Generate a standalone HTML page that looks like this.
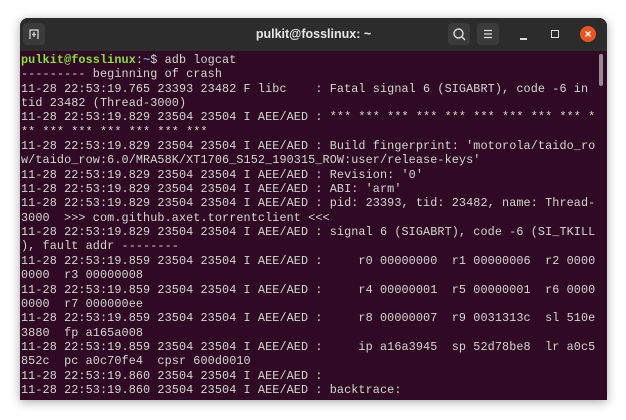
<!DOCTYPE html>
<html><head><style>
body{margin:0;width:626px;height:420px;background:#fff;overflow:hidden;position:relative;font-family:"Liberation Sans",sans-serif}
.win{position:absolute;left:20px;top:18px;width:587px;height:382px;border-radius:8px 8px 0 0;overflow:hidden;box-shadow:0 2px 10px rgba(0,0,0,.35);background:#300a24}
.tb{position:absolute;left:0;top:0;width:587px;height:33px;background:#2c2c2c}
.btn{position:absolute;top:5px;width:22px;height:22px;background:#3b3b3b;border-radius:4px}
.title{position:absolute;left:0;width:100%;top:9px;text-align:center;color:#e8e8e8;font-weight:bold;font-size:12.5px}
.term{position:absolute;left:1px;top:35px;font-family:"Liberation Mono",monospace;font-size:11.8px;line-height:14.35px;color:#d3d7cf;white-space:pre;letter-spacing:0.1px}
.g{color:#8ae234;font-weight:bold}.b{color:#729fcf;font-weight:bold}
</style></head><body>
<div class="win">
<div class="tb">
<div class="btn" style="left:3px"><svg width="22" height="22"><path d="M7 16V7h8v9M11 9v5M9 11.5h4" stroke="#ddd" stroke-width="1.2" fill="none"/></svg></div>
<div class="title">pulkit@fosslinux: ~</div>
<div class="btn" style="left:428px"><svg width="22" height="22"><circle cx="10.5" cy="10.5" r="4.5" stroke="#ddd" stroke-width="1.4" fill="none"/><path d="M14 14l3 3" stroke="#ddd" stroke-width="1.4"/></svg></div>
<div class="btn" style="left:457px"><svg width="22" height="22"><path d="M7 7.5h8M7 11h8M7 14.5h8" stroke="#ddd" stroke-width="1.3"/></svg></div>
<div style="position:absolute;left:500px;top:20px;width:7px;height:1.5px;background:#ddd"></div>
<div style="position:absolute;left:531px;top:12px;width:6px;height:6px;border:1.3px solid #ddd"></div>
<div style="position:absolute;left:560px;top:8px;width:16px;height:16px;border-radius:50%;background:#e95420;color:#fff;font-size:12px;line-height:16px;text-align:center;font-weight:bold">×</div>
</div>
<div style="position:absolute;left:579px;top:36px;width:4px;height:32px;background:#9a8a95;border-radius:2px"></div>
<div class="term"><span class="g">pulkit@fosslinux</span>:<span class="b">~</span>$ adb logcat
--------- beginning of crash
11-28 22:53:19.765 23393 23482 F libc    : Fatal signal 6 (SIGABRT), code -6 in
tid 23482 (Thread-3000)
11-28 22:53:19.829 23504 23504 I AEE/AED : *** *** *** *** *** *** *** *** *** *
** *** *** *** *** *** ***
11-28 22:53:19.829 23504 23504 I AEE/AED : Build fingerprint: 'motorola/taido_ro
w/taido_row:6.0/MRA58K/XT1706_S152_190315_ROW:user/release-keys'
11-28 22:53:19.829 23504 23504 I AEE/AED : Revision: '0'
11-28 22:53:19.829 23504 23504 I AEE/AED : ABI: 'arm'
11-28 22:53:19.829 23504 23504 I AEE/AED : pid: 23393, tid: 23482, name: Thread-
3000  >>> com.github.axet.torrentclient <<<
11-28 22:53:19.829 23504 23504 I AEE/AED : signal 6 (SIGABRT), code -6 (SI_TKILL
), fault addr --------
11-28 22:53:19.859 23504 23504 I AEE/AED :     r0 00000000  r1 00000006  r2 0000
0000  r3 00000008
11-28 22:53:19.859 23504 23504 I AEE/AED :     r4 00000001  r5 00000001  r6 0000
0000  r7 000000ee
11-28 22:53:19.859 23504 23504 I AEE/AED :     r8 00000007  r9 0031313c  sl 510e
3880  fp a165a008
11-28 22:53:19.859 23504 23504 I AEE/AED :     ip a16a3945  sp 52d78be8  lr a0c5
852c  pc a0c70fe4  cpsr 600d0010
11-28 22:53:19.860 23504 23504 I AEE/AED :
11-28 22:53:19.860 23504 23504 I AEE/AED : backtrace:</div>
</div>
</body></html>
